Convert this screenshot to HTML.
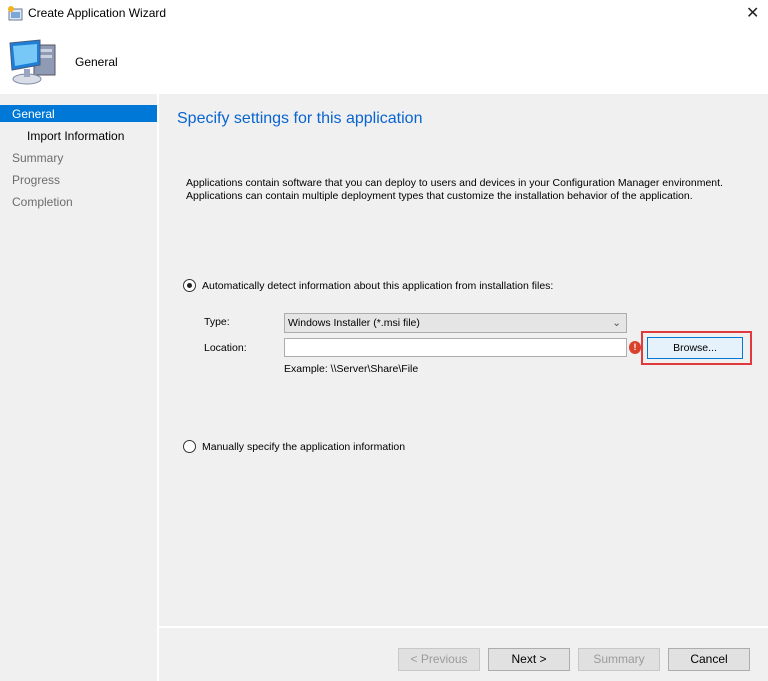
<!DOCTYPE html>
<html><head><style>
*{margin:0;padding:0;box-sizing:border-box}
body{width:768px;height:681px;background:#fff;font-family:"Liberation Sans",sans-serif;font-size:12px;color:#000;position:relative;overflow:hidden}
.a{position:absolute}
.nav{left:0;top:94px;width:157px;height:587px;background:#f0f0f0}
.main{left:159px;top:94px;width:609px;height:532px;background:#f0f0f0}
.foot{left:159px;top:628px;width:609px;height:53px;background:#f0f0f0}
.nv{position:absolute;left:12px;font-size:12px;color:#6d6d6d}
.btn{position:absolute;top:648px;height:23px;border:1px solid #adadad;background:#e1e1e1;text-align:center;line-height:21px;font-size:12px}
.dis{color:#9b9b9b;border-color:#c8c8c8;background:#e0e0e0}
.radio{position:absolute;width:13px;height:13px;border:1px solid #333;border-radius:50%;background:#fff}
.s{font-size:10.5px}
</style></head><body>
<svg class="a" style="left:7px;top:5px" width="16" height="16"><rect x="2" y="4" width="13" height="11" fill="#dfe7f2" stroke="#6b7b9b"/><rect x="4" y="7" width="9" height="6" fill="#7aa6d8"/><circle cx="4" cy="4" r="3" fill="#f5b21b"/></svg>
<div class="a" style="left:28px;top:6px;font-size:12px">Create Application Wizard</div>
<div class="a" style="left:746px;top:3px;font-size:16px;color:#222">✕</div>
<svg class="a" style="left:7px;top:37px" width="52" height="50">
<rect x="27" y="8" width="21" height="30" fill="#8f9bb5" stroke="#556"/><rect x="30" y="12" width="15" height="3" fill="#c9d1e0"/><rect x="30" y="18" width="15" height="3" fill="#c9d1e0"/>
<polygon points="3,6 33,3 33,28 5,33" fill="#1d7fd8" stroke="#4a5a7a"/><polygon points="6,9 30,7 30,25 8,29" fill="#78c8f7"/>
<ellipse cx="20" cy="42" rx="14" ry="5" fill="#d8dde8" stroke="#7a86a0"/><rect x="17" y="32" width="6" height="8" fill="#9aa6bf"/>
</svg>
<div class="a" style="left:75px;top:55px">General</div>
<div class="a nav"></div>
<div class="a main"></div>
<div class="a foot"></div>
<div class="a" style="left:0;top:105px;width:157px;height:17px;background:#0078d7"></div>
<div class="nv" style="top:107px;color:#fff">General</div>
<div class="nv" style="top:129px;left:27px;color:#000">Import Information</div>
<div class="nv" style="top:151px">Summary</div>
<div class="nv" style="top:173px">Progress</div>
<div class="nv" style="top:195px">Completion</div>
<div class="a" style="left:177px;top:110px;font-size:16px;color:#0a64d0">Specify settings for this application</div>
<div class="a s" style="left:186px;top:177px;line-height:13px">Applications contain software that you can deploy to users and devices in your Configuration Manager environment.<br>Applications can contain multiple deployment types that customize the installation behavior of the application.</div>
<div class="radio" style="left:183px;top:279px"><div style="position:absolute;left:3px;top:3px;width:5px;height:5px;border-radius:50%;background:#222"></div></div>
<div class="a s" style="left:202px;top:280px">Automatically detect information about this application from installation files:</div>
<div class="a s" style="left:204px;top:316px">Type:</div>
<div class="a s" style="left:284px;top:313px;width:343px;height:20px;background:#e5e5e5;border:1px solid #adadad;line-height:18px;padding-left:3px">Windows Installer (*.msi file)<span style="position:absolute;right:5px;top:0;color:#555">⌄</span></div>
<div class="a s" style="left:204px;top:342px">Location:</div>
<div class="a" style="left:284px;top:338px;width:343px;height:19px;background:#fff;border:1px solid #adadad"></div>
<div class="a" style="left:629px;top:341px;width:12px;height:13px;border-radius:50%;background:#d8412a;color:#fff;font-size:9px;font-weight:bold;text-align:center;line-height:13px">!</div>
<div class="a" style="left:641px;top:331px;width:111px;height:34px;border:2px solid #e0393e"></div>
<div class="a s" style="left:647px;top:337px;width:96px;height:22px;background:#e5f1fb;border:1px solid #0078d7;text-align:center;line-height:20px">Browse...</div>
<div class="a s" style="left:284px;top:363px">Example: \\Server\Share\File</div>
<div class="radio" style="left:183px;top:440px"></div>
<div class="a s" style="left:202px;top:441px">Manually specify the application information</div>
<div class="btn dis" style="left:398px;width:82px">&lt; Previous</div>
<div class="btn" style="left:488px;width:82px">Next &gt;</div>
<div class="btn dis" style="left:578px;width:82px">Summary</div>
<div class="btn" style="left:668px;width:82px">Cancel</div>
</body></html>
